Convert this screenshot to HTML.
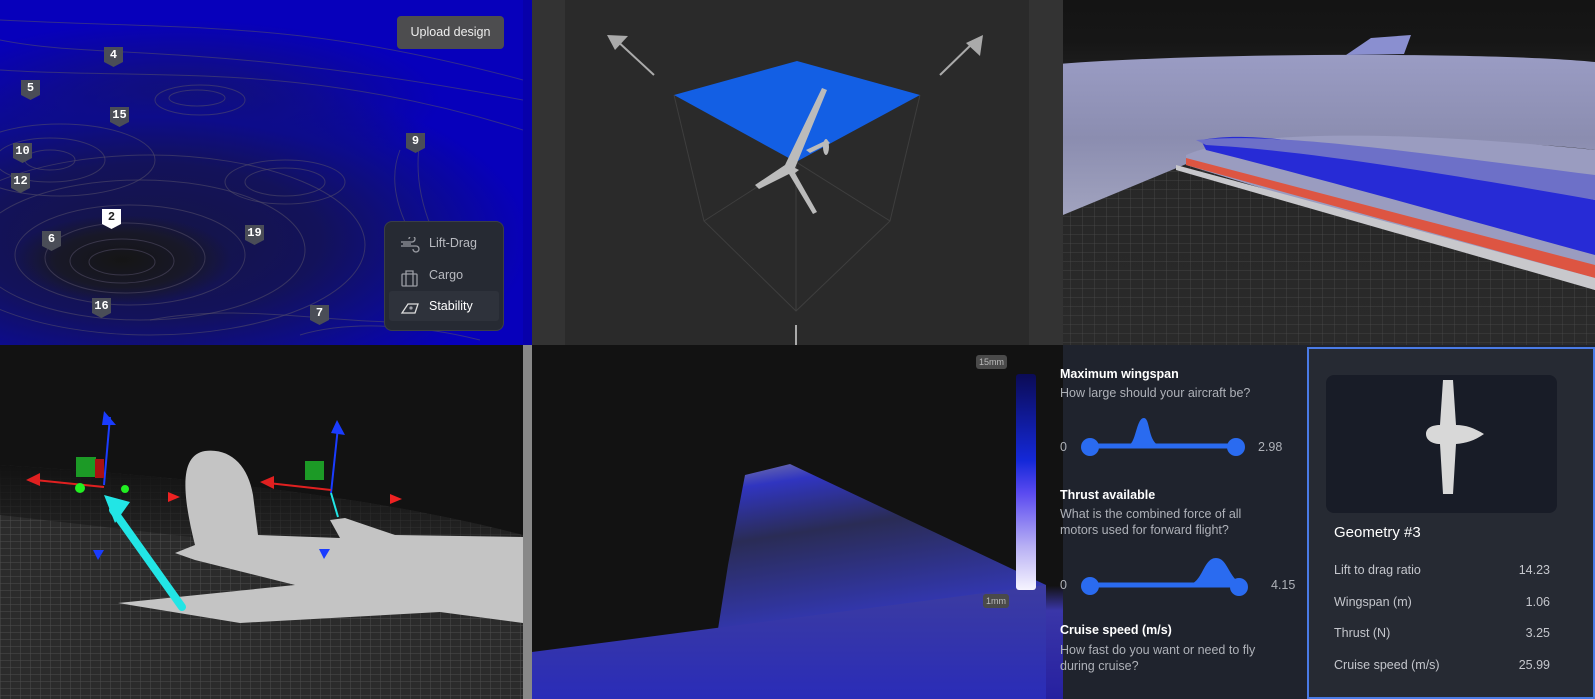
<!DOCTYPE html>
<html><head><meta charset="utf-8"><style>
*{margin:0;padding:0;box-sizing:border-box}
body{width:1595px;height:699px;overflow:hidden;background:#111;font-family:"Liberation Sans",sans-serif;position:relative}
.p{position:absolute;overflow:hidden}
.pin{position:absolute;width:19px;height:20px;background:#4a4d57;color:#fff;font:bold 12px "Liberation Mono",monospace;text-align:center;line-height:17px;clip-path:polygon(0 0,100% 0,100% 75%,50% 100%,0 75%)}
.pin.w{background:#fff;color:#222}
.t{position:absolute;color:#fff;font-size:12.5px}
.s{position:absolute;color:#aeb1b8;font-size:12.5px;line-height:16px}
.row{position:absolute;left:1334px;width:216px;font-size:12.5px;color:#c4c6cc;display:flex;justify-content:space-between}
</style></head><body>

<!-- panel 1 -->
<div class="p" style="left:0;top:0;width:523px;height:345px;background:radial-gradient(ellipse 110px 45px at 122px 260px,#151515 0%,#181828 60%,rgba(20,20,60,0) 100%),radial-gradient(ellipse 380px 170px at 150px 240px,#151545 0%,#13125a 45%,#0d0c8a 72%,rgba(7,0,187,0) 100%),radial-gradient(ellipse 260px 80px at 180px 100px,#15146a 0%,rgba(7,0,187,0) 100%),#0700bb">
<svg width="523" height="345" style="position:absolute;left:0;top:0" fill="none" stroke="#55506a" stroke-opacity=".55" stroke-width="1">
<ellipse cx="122" cy="262" rx="33" ry="13"/><ellipse cx="122" cy="261" rx="52" ry="22"/><ellipse cx="125" cy="258" rx="80" ry="35"/><ellipse cx="130" cy="255" rx="115" ry="50"/><ellipse cx="140" cy="250" rx="165" ry="70"/><ellipse cx="150" cy="245" rx="215" ry="90"/>
<ellipse cx="197" cy="98" rx="28" ry="8"/><ellipse cx="200" cy="100" rx="45" ry="15"/>
<ellipse cx="285" cy="182" rx="40" ry="14"/><ellipse cx="285" cy="182" rx="60" ry="22"/>
<path d="M0 40 C100 60 200 40 523 100"/><path d="M0 70 C150 80 300 60 523 130"/><path d="M0 20 C200 30 300 20 523 80"/><path d="M400 150 C380 200 420 250 450 300"/><path d="M420 140 C410 200 440 260 480 300"/>
<ellipse cx="50" cy="160" rx="25" ry="10"/><ellipse cx="50" cy="160" rx="55" ry="22"/><ellipse cx="60" cy="160" rx="95" ry="36"/>
<path d="M150 320 C250 300 350 330 450 320"/><path d="M300 335 C350 320 420 325 480 340"/>
</svg>
<div style="position:absolute;left:397px;top:16px;width:107px;height:33px;background:#4d4d4f;border-radius:4px;color:#eee;font-size:12.5px;text-align:center;line-height:33px">Upload design</div>
<div class="pin" style="left:104px;top:47px">4</div>
<div class="pin" style="left:21px;top:80px">5</div>
<div class="pin" style="left:110px;top:107px">15</div>
<div class="pin" style="left:13px;top:143px">10</div>
<div class="pin" style="left:11px;top:173px">12</div>
<div class="pin w" style="left:102px;top:209px">2</div>
<div class="pin" style="left:42px;top:231px">6</div>
<div class="pin" style="left:245px;top:225px">19</div>
<div class="pin" style="left:406px;top:133px">9</div>
<div class="pin" style="left:92px;top:298px">16</div>
<div class="pin" style="left:310px;top:305px">7</div>
<div style="position:absolute;left:384px;top:221px;width:120px;height:110px;background:#262a33;border:1px solid #3a3e48;border-radius:8px">
<div style="position:absolute;left:4px;top:69px;width:110px;height:30px;background:#2e323b;border-radius:3px"></div>
<div style="position:absolute;left:44px;top:14px;color:#b8bac0;font-size:12.5px">Lift-Drag</div>
<div style="position:absolute;left:44px;top:46px;color:#b8bac0;font-size:12.5px">Cargo</div>
<div style="position:absolute;left:44px;top:77px;color:#fff;font-size:12.5px">Stability</div>
<svg style="position:absolute;left:15px;top:15px" width="20" height="80" fill="none" stroke="#9a9ca3" stroke-width="1.3"><path d="M1 5h11a3 3 0 1 0-3-3M1 9h15a3 3 0 1 1-3 3M3 7h8"/><rect x="2" y="37" width="15" height="12" rx="1"/><path d="M6 37v-3h7v3M6 37v12M13 37v12"/><path d="M2 76l6-9h10l-3 9z" stroke="#ddd"/><circle cx="11" cy="71" r="1" fill="#ddd"/></svg>
</div>
</div>

<!-- panel 2 -->
<div class="p" style="left:523px;top:0;width:523px;height:345px;background:#2a2a2a">
<div style="position:absolute;left:0;top:0;width:9px;height:345px;background:#0700aa"></div>
<div style="position:absolute;left:9px;top:0;width:33px;height:345px;background:#333"></div>
<div style="position:absolute;left:506px;top:0;width:17px;height:345px;background:#333"></div>
<svg width="523" height="345" style="position:absolute;left:0;top:0">
<g stroke="#3e3e3e" fill="none"><path d="M151 95L181 221L273 311L367 221L397 95M181 221L273 162L367 221M273 162V311"/></g>
<polygon points="151,95 274,61 397,95 273,162" fill="#135fe4"/>
<g stroke="#aaa" stroke-width="2" fill="#aaa"><path d="M131 75L91 38"/><polygon points="84,35 105,36 92,50" stroke="none"/><path d="M417 75L453 40"/><polygon points="460,35 457,56 443,43" stroke="none"/></g>
<line x1="273" y1="325" x2="273" y2="345" stroke="#aaa" stroke-width="2"/>
<g fill="#bbb"><path d="M299 88l5 2-32 78 4 2-4 3 22 39-4 2-24-40-30 15-4-4 30-20z"/><path d="M283 150l21-10 3 3-20 10z"/><ellipse cx="303" cy="147" rx="3" ry="8"/></g>
</svg>
</div>

<!-- panel 3 -->
<div class="p" style="left:1046px;top:0;width:549px;height:345px;background:linear-gradient(#141414 0,#161616 12%,#262626 30%,#2a2a2a 100%)">
<svg width="549" height="345" style="position:absolute;left:0;top:0">
<defs><pattern id="g" width="12" height="9" patternUnits="userSpaceOnUse"><path d="M0 0H12M0 0V9" stroke="#4a4a4a" stroke-width=".8" fill="none"/></pattern>
<linearGradient id="wg" x1="0" y1="0" x2="0" y2="1"><stop offset="0" stop-color="#9a9cc4"/><stop offset=".5" stop-color="#8b8db0"/><stop offset="1" stop-color="#a3a5c0"/></linearGradient></defs>
<rect x="0" y="150" width="549" height="195" fill="url(#g)"/>
<path d="M325 38 L365 35 L358 54 L300 55z" fill="#8a8fd0"/>
<path d="M0 65 C150 52 450 52 549 62 L549 150 C470 140 420 145 400 150 L150 160 L0 222z" fill="url(#wg)"/>
<path d="M140 155 C200 130 350 130 549 150 L549 290 L140 165z" fill="#9a9cc0"/>
<path d="M155 140 C200 132 260 135 549 200 L549 255 C420 220 300 185 160 150z" fill="#1b1fd8" opacity=".9"/>
<path d="M150 140 C230 132 350 150 549 175 L549 200 C380 170 250 150 160 145z" fill="#6d70c8"/>
<path d="M140 158 L549 265 L549 278 L140 165z" fill="#dd5542"/>
<path d="M130 165 L549 278 L549 290 L130 170z" fill="#c8c8cc"/>
</svg>
<div style="position:absolute;left:0;top:0;width:17px;height:345px;background:#333"></div>
</div>

<!-- panel 4 -->
<div class="p" style="left:0;top:345px;width:523px;height:354px;background:#121212">
<svg width="523" height="354" style="position:absolute;left:0;top:0">
<defs><pattern id="g2" width="10" height="7" patternUnits="userSpaceOnUse"><rect width="10" height="7" fill="#2b2b2b"/><path d="M0 0H10M0 0V7" stroke="#4c4c4c" stroke-width="1" fill="none"/></pattern>
<linearGradient id="fade" x1="0" y1="0" x2="0" y2="1"><stop offset="0" stop-color="#121212"/><stop offset="1" stop-color="#121212" stop-opacity="0"/></linearGradient></defs>
<path d="M0 120 C150 130 350 145 523 190 L523 354 L0 354z" fill="url(#g2)"/>
<path d="M0 120 C150 130 350 145 523 190 L523 230 L0 170z" fill="url(#fade)"/>
<path d="M195 200 C180 140 182 110 205 106 C230 103 248 120 253 150 L258 190 L340 193 L330 175 L345 173 L395 190 L523 192 L523 278 L440 267 L240 278 L118 258 L295 240 L195 215 L175 208z" fill="#c4c4c4"/>
<g stroke-width="2"><line x1="104" y1="140" x2="110" y2="72" stroke="#1a3cff"/><line x1="35" y1="135" x2="104" y2="142" stroke="#e02020"/><line x1="331" y1="148" x2="338" y2="82" stroke="#1a3cff"/><line x1="268" y1="138" x2="331" y2="145" stroke="#e02020"/></g>
<polygon points="104,66 116,80 102,80" fill="#1a3cff"/><polygon points="337,75 345,90 331,88" fill="#1a3cff"/>
<polygon points="26,135 40,128 40,141" fill="#e02020"/><polygon points="260,137 274,131 274,144" fill="#e02020"/>
<rect x="76" y="112" width="20" height="20" fill="#1c9a26"/><rect x="95" y="114" width="9" height="19" fill="#a11"/><rect x="305" y="116" width="19" height="19" fill="#1c9a26"/>
<line x1="113" y1="165" x2="182" y2="262" stroke="#22e5e5" stroke-width="8" stroke-linecap="round"/><polygon points="104,150 130,157 115,178" fill="#22e5e5"/>
<line x1="331" y1="148" x2="338" y2="172" stroke="#22e5e5" stroke-width="2"/>
<circle cx="80" cy="143" r="5" fill="#2e2"/><circle cx="125" cy="144" r="4" fill="#2e2"/>
<polygon points="168,147 180,152 168,157" fill="#e22"/><polygon points="390,149 402,154 390,159" fill="#e22"/>
<polygon points="93,205 104,205 98,215" fill="#1a3cff"/><polygon points="319,204 330,204 324,214" fill="#1a3cff"/>
</svg>
</div>

<!-- panel 5 -->
<div class="p" style="left:523px;top:345px;width:523px;height:354px;background:#121212">
<svg width="523" height="354" style="position:absolute;left:0;top:0">
<defs><linearGradient id="w" x1="0" y1="0" x2="0.3" y2="1"><stop offset="0" stop-color="#7a78a8"/><stop offset=".15" stop-color="#3035c0"/><stop offset=".45" stop-color="#2a2c55"/><stop offset="1" stop-color="#3338b8"/></linearGradient>
<linearGradient id="w2" x1="0" y1="0" x2="0" y2="1"><stop offset="0" stop-color="#3c3ca0"/><stop offset="1" stop-color="#2a2cb8"/></linearGradient></defs>
<path d="M222 130 L267 119 L523 240 L523 260 L195 284 L205 220z" fill="url(#w)"/>
<path d="M9 307 L523 240 L523 354 L9 354z" fill="url(#w2)"/>
</svg>
<div style="position:absolute;left:0;top:0;width:9px;height:354px;background:#888"></div>
<div style="position:absolute;left:493px;top:29px;width:20px;height:216px;border-radius:3px;background:linear-gradient(#0b0b55,#1428d8 40%,#5a4af0 55%,#b8b0f4 80%,#f6f4ff)"></div>
<div style="position:absolute;left:453px;top:10px;background:#4a4a4a;color:#bbb;font-size:9px;padding:2px 3px;border-radius:3px">15mm</div>
<div style="position:absolute;left:460px;top:249px;background:#4a4a4a;color:#bbb;font-size:9px;padding:2px 3px;border-radius:3px">1mm</div>
</div>

<!-- panel 6 -->
<div class="p" style="left:1046px;top:345px;width:549px;height:354px;background:#1f232d">
<div style="position:absolute;left:0;top:0;width:17px;height:354px;background:linear-gradient(#121212 0,#121212 68%,#3a36a8 75%,#2620a0 100%)"></div>
</div>
<div style="position:absolute;left:1307px;top:347px;width:288px;height:352px;background:#262a33;border:2px solid #4a7be6"></div>
<div style="position:absolute;left:1326px;top:375px;width:231px;height:138px;background:#181c27;border-radius:8px"></div>
<svg style="position:absolute;left:1410px;top:375px" width="80" height="125"><path d="M33 5h10l3 45c10 0 18 3 28 9c-10 7-18 9-28 10l-3 50h-10l-3-50c-8 0-14-4-14-10c0-6 6-9 14-9z" fill="#d8d8d8"/></svg>
<div class="t" style="left:1060px;top:367px;font-weight:bold">Maximum wingspan</div>
<div class="s" style="left:1060px;top:385px">How large should your aircraft be?</div>
<div class="s" style="left:1060px;top:439px">0</div>
<div class="s" style="left:1258px;top:439px">2.98</div>
<svg style="position:absolute;left:1078px;top:410px" width="180" height="50"><path d="M12 36h150" stroke="#2a6bf0" stroke-width="5"/><path d="M50 35 C58 35 58 8 66 8 C72 8 70 30 80 35z" fill="#2a6bf0"/><circle cx="12" cy="37" r="9" fill="#2a6bf0"/><circle cx="158" cy="37" r="9" fill="#2a6bf0"/></svg>
<div class="t" style="left:1060px;top:488px;font-weight:bold">Thrust available</div>
<div class="s" style="left:1060px;top:506px;width:200px">What is the combined force of all motors used for forward flight?</div>
<div class="s" style="left:1060px;top:577px">0</div>
<div class="s" style="left:1271px;top:577px">4.15</div>
<svg style="position:absolute;left:1078px;top:548px" width="180" height="50"><path d="M12 37h150" stroke="#2a6bf0" stroke-width="5"/><path d="M110 37 C125 35 125 10 138 10 C150 10 150 30 165 37z" fill="#2a6bf0"/><circle cx="12" cy="38" r="9" fill="#2a6bf0"/><circle cx="161" cy="39" r="9" fill="#2a6bf0"/></svg>
<div class="t" style="left:1060px;top:623px;font-weight:bold">Cruise speed (m/s)</div>
<div class="s" style="left:1060px;top:642px;width:210px">How fast do you want or need to fly during cruise?</div>
<div style="position:absolute;left:1334px;top:524px;color:#fff;font-size:15px">Geometry #3</div>
<div class="row" style="top:563px"><span>Lift to drag ratio</span><span>14.23</span></div>
<div class="row" style="top:595px"><span>Wingspan (m)</span><span>1.06</span></div>
<div class="row" style="top:626px"><span>Thrust (N)</span><span>3.25</span></div>
<div class="row" style="top:658px"><span>Cruise speed (m/s)</span><span>25.99</span></div>
</body></html>
